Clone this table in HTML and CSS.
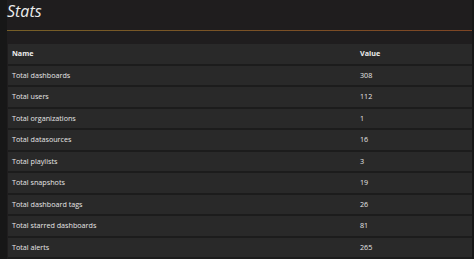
FILE: index.html
```html
<!DOCTYPE html>
<html>
<head>
<meta charset="utf-8">
<link rel="stylesheet" href="styles.css">
</head>
<body>
<div class="page">
  <div class="page-header">
    <h1 class="page-title">Stats</h1>
  </div>
  <table class="stats-table">
    <thead>
      <tr><th class="col-name">Name</th><th class="col-value">Value</th></tr>
    </thead>
    <tbody>
      <tr><td>Total dashboards</td><td>308</td></tr>
      <tr><td>Total users</td><td>112</td></tr>
      <tr><td>Total organizations</td><td>1</td></tr>
      <tr><td>Total datasources</td><td>16</td></tr>
      <tr><td>Total playlists</td><td>3</td></tr>
      <tr><td>Total snapshots</td><td>19</td></tr>
      <tr><td>Total dashboard tags</td><td>26</td></tr>
      <tr><td>Total starred dashboards</td><td>81</td></tr>
      <tr><td>Total alerts</td><td>265</td></tr>
    </tbody>
  </table>
</div>
</body>
</html>
```
FILE: styles.css
```css
html, body {
  margin: 0;
  padding: 0;
  background: #171717;
  overflow: hidden;
}
body {
  font-family: "Open Sans", "Liberation Sans", sans-serif;
  color: #e6e6e6;
}
.page {
  margin-left: 7px;
  margin-right: 2px;
  background: #1f1d1e;
  min-height: 259px;
}
.page-header {
  height: 30px;
  border-bottom: 1px solid transparent;
  border-image: linear-gradient(to right, #765f27 0%, #7e4524 100%) 1;
  margin-bottom: 13px;
}
.page-title {
  margin: 0;
  padding-top: 1px;
  font-size: 16px;
  font-weight: 400;
  font-style: italic;
  line-height: 20px;
  color: #ececec;
}
.stats-table {
  width: calc(100% - 1px);
  margin-left: 1px;
  border-collapse: collapse;
  font-size: 7.2px;
}
.stats-table th,
.stats-table td {
  text-align: left;
  padding: 0 4px;
  height: 19.5px;
  line-height: 9px;
  background: #292929;
  border-bottom: 2px solid #1c1c1c;
}
.stats-table th {
  font-weight: 700;
  color: #ededed;
}
.col-name {
  width: 75%;
}
```
